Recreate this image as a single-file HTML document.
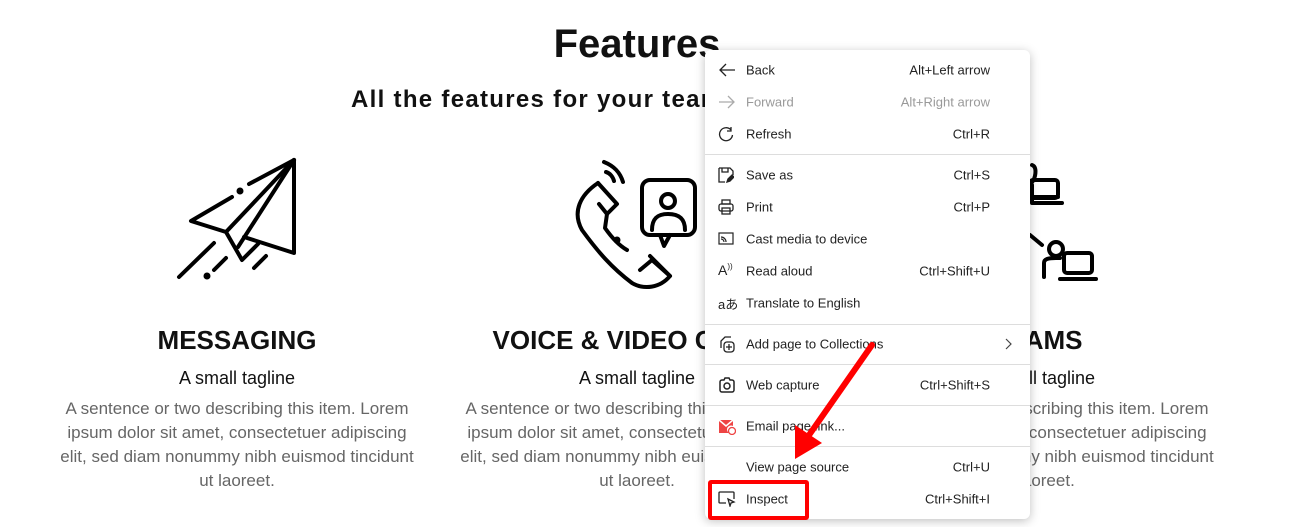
<!DOCTYPE html>
<html><head><style>
body{margin:0;width:1291px;height:527px;overflow:hidden;background:#fff;font-family:"Liberation Sans",sans-serif;position:relative}
.t{position:absolute;white-space:nowrap;color:#111}
.c{text-align:center;transform:translateX(-50%)}
.h1{font-size:40px;font-weight:bold;top:22px;left:637px}
.h2{font-size:24px;font-weight:bold;top:86px;left:351px;letter-spacing:1.3px}
.h3{font-size:26px;font-weight:bold;top:325px}
.tg{font-size:18px;top:368px}
.d{font-size:17px;color:#666;line-height:24px;top:397px}
.menu{position:absolute;left:705px;top:50px;width:325px;height:469px;background:#fff;border-radius:6px;box-shadow:0 2px 10px rgba(0,0,0,.25)}
.it{position:absolute;left:41px;font-size:13px;color:#222;transform:translateY(-50%)}
.sc{position:absolute;right:40px;font-size:13px;color:#222;transform:translateY(-50%)}
.sep{position:absolute;left:0;right:0;height:1px;background:#ddd}
.ic{position:absolute;left:13px}
</style></head><body>
<div class="t c h1">Features</div>
<div class="t h2">All the features for your team</div>

<svg style="position:absolute;left:0;top:0" width="720" height="300" fill="none" stroke="#000" stroke-width="4" stroke-linecap="round" stroke-linejoin="round">
<path d="M294 160 L294 253 L244 237"/><path d="M294 160 L249 184"/><circle cx="240" cy="191" r="1.5" fill="#000"/><path d="M232 197 L191 221 L226 232 L242 260 L258 244"/><path d="M294 160 L226 232"/><path d="M294 160 L238 247"/>
<path d="M214 243 L179 277"/><path d="M226 258 L214 270"/><circle cx="207" cy="276" r="1.5" fill="#000"/><path d="M266 256 L254 268"/>
<path d="M598 183 C580 195 572 212 582 230 C598 252 612 268 632 283 C644 290 660 288 670 276 L652 260 L640 270"/><path d="M598 183 L617 204 L607 214 L599 204"/><path d="M607 214 L605 228 C612 238 620 246 627 250"/><path d="M670 276 L650 256"/><circle cx="617" cy="240" r="1.5" fill="#000"/>
<path d="M604 162 C614 166 620 172 623 182"/><path d="M606 172 C610 173 613 177 614 181"/>
<rect x="642" y="180" width="53" height="55" rx="8"/><circle cx="668" cy="201" r="7"/><path d="M652 230 C652 218 658 214 668 214 C678 214 685 218 685 230"/><path d="M660 235 L664 246 L670 235"/></svg>

<svg style="position:absolute;left:1020px;top:155px" width="80" height="130" viewBox="0 0 80 130" fill="none" stroke="#000" stroke-width="4" stroke-linecap="round" stroke-linejoin="round">
<path d="M12 10 C18 12 15 25 12 27"/><path d="M12 30 L12 42 L38 42"/><path d="M12 42 L12 48 L42 48"/><rect x="10" y="25" width="28" height="18" rx="3"/>
<path d="M10 80 L22 90"/><circle cx="36" cy="94" r="7"/><path d="M24 122 L24 108 C24 104 28 103 36 103 L40 103"/><rect x="44" y="98" width="28" height="20" rx="3"/><path d="M40 124 L76 124"/></svg>

<div class="t c h3" style="left:237px">MESSAGING</div>
<div class="t c h3" style="left:637px">VOICE &amp; VIDEO CALLS</div>
<div class="t c h3" style="left:1037px">TEAMS</div>
<div class="t c tg" style="left:237px">A small tagline</div>
<div class="t c tg" style="left:637px">A small tagline</div>
<div class="t c tg" style="left:1037px">A small tagline</div>
<div class="t c d" style="left:237px">A sentence or two describing this item. Lorem<br>ipsum dolor sit amet, consectetuer adipiscing<br>elit, sed diam nonummy nibh euismod tincidunt<br>ut laoreet.</div>
<div class="t c d" style="left:637px">A sentence or two describing this item. Lorem<br>ipsum dolor sit amet, consectetuer adipiscing<br>elit, sed diam nonummy nibh euismod tincidunt<br>ut laoreet.</div>
<div class="t c d" style="left:1037px">A sentence or two describing this item. Lorem<br>ipsum dolor sit amet, consectetuer adipiscing<br>elit, sed diam nonummy nibh euismod tincidunt<br>ut laoreet.</div>

<div class="menu">
<svg class="ic" style="top:12px" width="18" height="16" viewBox="0 0 18 16" fill="none" stroke="#222" stroke-width="1.3"><path d="M17 8H2M8 2L2 8l6 6"/></svg>
<div class="it" style="top:20px">Back</div><div class="sc" style="top:20px">Alt+Left arrow</div>
<svg class="ic" style="top:44px" width="18" height="16" viewBox="0 0 18 16" fill="none" stroke="#aaa" stroke-width="1.3"><path d="M1 8h15M10 2l6 6-6 6"/></svg>
<div class="it" style="top:52px;color:#999">Forward</div><div class="sc" style="top:52px;color:#999">Alt+Right arrow</div>
<svg class="ic" style="top:76px" width="16" height="16" viewBox="0 0 16 16" fill="none" stroke="#222" stroke-width="1.3"><path d="M13 4A6.5 6.5 0 1 0 14.5 9M13 1v4H9"/></svg>
<div class="it" style="top:84px">Refresh</div><div class="sc" style="top:84px">Ctrl+R</div>
<div class="sep" style="top:104px"></div>
<svg class="ic" style="top:117px" width="16" height="16" viewBox="0 0 16 16" fill="none" stroke="#222" stroke-width="1.3"><path d="M1 1h11l3 3v4M1 1v14h6M4 1v4h6V1"/><path d="M9 15l1-3 4-4 2 2-4 4z" fill="#222"/></svg>
<div class="it" style="top:125px">Save as</div><div class="sc" style="top:125px">Ctrl+S</div>
<svg class="ic" style="top:149px" width="16" height="16" viewBox="0 0 16 16" fill="none" stroke="#222" stroke-width="1.3"><rect x="1" y="5" width="14" height="7" rx="2"/><rect x="4" y="1" width="8" height="4"/><rect x="4" y="9" width="8" height="6"/></svg>
<div class="it" style="top:157px">Print</div><div class="sc" style="top:157px">Ctrl+P</div>
<svg class="ic" style="top:182px" width="16" height="14" viewBox="0 0 16 14" fill="none" stroke="#222" stroke-width="1.2"><rect x="1" y="1" width="14" height="11"/><path d="M3 7a3 3 0 0 1 3 3M3 5a5 5 0 0 1 5 5"/></svg>
<div class="it" style="top:189px">Cast media to device</div>
<div class="ic" style="top:212px;font-size:14px;color:#222">A<span style="font-size:8px;vertical-align:top">))</span></div>
<div class="it" style="top:221px">Read aloud</div><div class="sc" style="top:221px">Ctrl+Shift+U</div>
<div class="ic" style="top:244px;font-size:13px;color:#222;font-family:'Liberation Sans','Noto Sans CJK JP',sans-serif">aあ</div>
<div class="it" style="top:253px">Translate to English</div>
<div class="sep" style="top:274px"></div>
<svg class="ic" style="top:286px" width="17" height="17" viewBox="0 0 17 17" fill="none" stroke="#222" stroke-width="1.3"><path d="M3 12V5l4-4h6"/><rect x="6" y="6" width="10" height="10" rx="3"/><path d="M11 8v6M8 11h6"/></svg>
<div class="it" style="top:294px">Add page to Collections</div>
<svg style="position:absolute;left:300px;top:288px" width="8" height="12" viewBox="0 0 8 12" fill="none" stroke="#444" stroke-width="1.2"><path d="M1 1l5 5-5 5"/></svg>
<div class="sep" style="top:314px"></div>
<svg class="ic" style="top:327px" width="17" height="17" viewBox="0 0 17 17" fill="none" stroke="#222" stroke-width="1.5"><path d="M4 3h2l1-2h4l1 2h2a2 2 0 0 1 2 2v8a2 2 0 0 1-2 2H4a2 2 0 0 1-2-2V5a2 2 0 0 1 2-2z"/><circle cx="9" cy="9" r="3"/></svg>
<div class="it" style="top:335px">Web capture</div><div class="sc" style="top:335px">Ctrl+Shift+S</div>
<div class="sep" style="top:355px"></div>
<svg class="ic" style="top:369px" width="18" height="16" viewBox="0 0 18 16"><path d="M1 1h14v6a4 4 0 0 0-4 7H1z" fill="#e44"/><path d="M1 1l7 6 7-6" stroke="#fff" stroke-width="1.5" fill="none"/><circle cx="14" cy="12" r="3.5" fill="none" stroke="#e44" stroke-width="1.3"/></svg>
<div class="it" style="top:376px">Email page link...</div>
<div class="sep" style="top:396px"></div>
<div class="it" style="top:417px">View page source</div><div class="sc" style="top:417px">Ctrl+U</div>
<svg class="ic" style="top:441px" width="18" height="16" viewBox="0 0 18 16" fill="none" stroke="#222" stroke-width="1.3"><path d="M8 12H2a1 1 0 0 1-1-1V2a1 1 0 0 1 1-1h13a1 1 0 0 1 1 1v6"/><path d="M10 8l6 3-3 1-1 3z"/></svg>
<div class="it" style="top:449px">Inspect</div><div class="sc" style="top:449px">Ctrl+Shift+I</div>
</div>
<div style="position:absolute;left:708px;top:480px;width:93px;height:32px;border:4px solid #f00;border-radius:3px"></div>
<svg style="position:absolute;left:0;top:0" width="1291" height="527"><path d="M872 345 L807 438" stroke="#f00" stroke-width="6" stroke-linecap="round"/><path d="M795 459 L795 425 L822 443 Z" fill="#f00"/></svg>
</body></html>
